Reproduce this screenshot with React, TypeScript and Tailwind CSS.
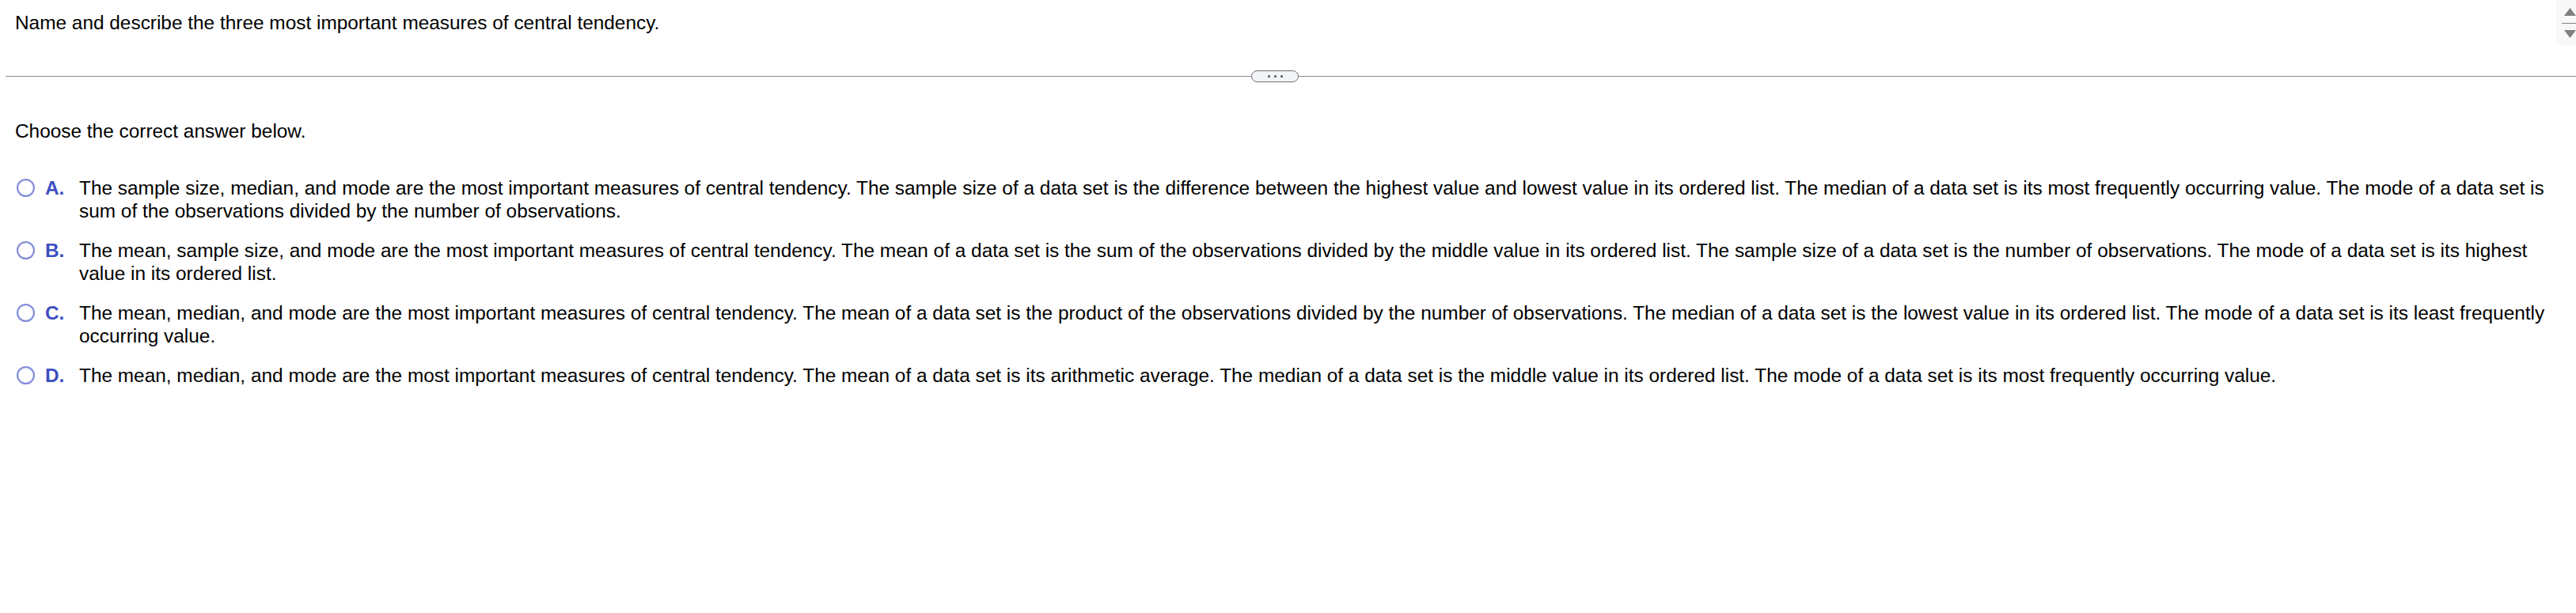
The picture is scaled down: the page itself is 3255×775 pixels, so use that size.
import React from "react";

const options = [
  {
    letter: "A.",
    text: "The sample size, median, and mode are the most important measures of central tendency. The sample size of a data set is the difference between the highest value and lowest value in its ordered list. The median of a data set is its most frequently occurring value. The mode of a data set is sum of the observations divided by the number of observations.",
  },
  {
    letter: "B.",
    text: "The mean, sample size, and mode are the most important measures of central tendency. The mean of a data set is the sum of the observations divided by the middle value in its ordered list. The sample size of a data set is the number of observations. The mode of a data set is its highest value in its ordered list.",
  },
  {
    letter: "C.",
    text: "The mean, median, and mode are the most important measures of central tendency. The mean of a data set is the product of the observations divided by the number of observations. The median of a data set is the lowest value in its ordered list. The mode of a data set is its least frequently occurring value.",
  },
  {
    letter: "D.",
    text: "The mean, median, and mode are the most important measures of central tendency. The mean of a data set is its arithmetic average. The median of a data set is the middle value in its ordered list. The mode of a data set is its most frequently occurring value.",
  },
];

export default function App() {
  return (
    <div className="relative w-full min-h-[775px] bg-white text-black font-['Liberation_Sans',Arial,sans-serif] text-[24.4px] leading-[29px]">
      {/* scroll arrows overlay */}
      <div className="absolute right-0 top-0 w-[25px] h-[57px] bg-[#f8f8f8] flex flex-col items-end pt-[10px]">
        <svg width="15" height="10" viewBox="0 0 15 10">
          <polygon points="7.5,0 15,10 0,10" fill="#808080" />
        </svg>
        <div className="mt-[9px] w-[18px] h-px bg-[#808080]" />
        <svg width="15" height="10" viewBox="0 0 15 10" className="mt-[8px]">
          <polygon points="0,0 15,0 7.5,10" fill="#808080" />
        </svg>
      </div>

      <div className="pl-[19px] pt-[14px]">
        Name and describe the three most important measures of central tendency.
      </div>

      <div className="relative ml-[7px] mt-[53px] h-px bg-[#8a8d93]">
        <div className="absolute left-[1574px] top-[-7px] w-[60px] h-[15px] rounded-full border border-[#6b6f76] bg-[#f3f4f6] flex items-center justify-center gap-[5px]">
          <span className="w-[3px] h-[3px] rounded-full bg-[#4a4d52]" />
          <span className="w-[3px] h-[3px] rounded-full bg-[#4a4d52]" />
          <span className="w-[3px] h-[3px] rounded-full bg-[#4a4d52]" />
        </div>
      </div>

      <div className="pl-[19px] mt-[54px]">Choose the correct answer below.</div>

      <div className="mt-[43px] pl-[21px] pr-[25px] flex flex-col gap-[21px]">
        {options.map((o) => (
          <div key={o.letter} className="flex items-start">
            <div className="mt-[3px] w-[23px] h-[23px] shrink-0 rounded-full border-[2.5px] border-[#7f8ad8] bg-white shadow-[inset_0_0_2px_#c5cbf0]" />
            <div className="ml-[13px] w-[43px] shrink-0 font-bold text-[#3d4fc0]">{o.letter}</div>
            <div className="flex-1">{o.text}</div>
          </div>
        ))}
      </div>
    </div>
  );
}
